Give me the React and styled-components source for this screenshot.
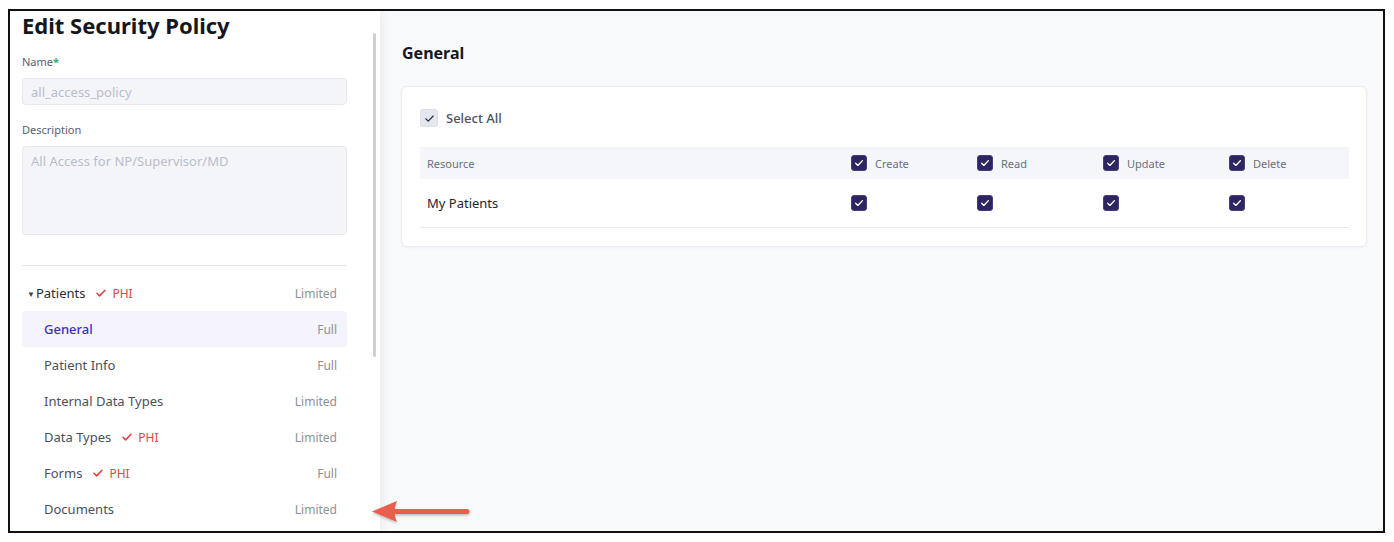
import React from 'react';
import styled, { createGlobalStyle } from 'styled-components';

const GlobalStyle = createGlobalStyle`
  html, body {
    margin: 0;
    padding: 0;
    background: #ffffff;
    font-family: "Noto Sans", "Open Sans", sans-serif;
  }
  * { box-sizing: border-box; }
`;

const Frame = styled.div`
  position: relative;
  margin: 9px 0 0 8px;
  width: 1377px;
  height: 524px;
  border: 2px solid #111;
  display: flex;
  overflow: hidden;
  background: #f8f9fb;
`;

const Sidebar = styled.aside`
  position: relative;
  width: 370px;
  flex-shrink: 0;
  background: #fff;
  padding: 0 33px 0 12px;
  overflow: hidden;
  box-shadow: 3px 0 10px rgba(30, 40, 80, 0.06);
  z-index: 1;
`;

const Scrollbar = styled.div`
  position: absolute;
  left: 363px;
  top: 22px;
  width: 3px;
  height: 324px;
  border-radius: 2px;
  background: #cfcfd2;
`;

const Title = styled.h1`
  margin: 0;
  font-size: 22px;
  line-height: 28px;
  font-weight: 700;
  color: #16171c;
`;

const Label = styled.div`
  margin-top: ${p => p.$top}px;
  font-size: 11px;
  line-height: 16px;
  color: #5a5e6b;

  b {
    color: #2aa866;
    font-weight: 700;
  }
`;

const Field = styled.div`
  margin-top: 8px;
  height: ${p => p.$h}px;
  background: #f4f5f9;
  border: 1px solid #e6e8ee;
  border-radius: 4px;
  padding: ${p => (p.$multi ? '5px 8px' : '0 8px')};
  display: flex;
  align-items: ${p => (p.$multi ? 'flex-start' : 'center')};
  font-size: 13px;
  color: #b9bdcb;
`;

const Divider = styled.div`
  margin-top: 30px;
  height: 1px;
  background: #e6e8ed;
`;

const TreeList = styled.div`
  margin-top: 9px;
  display: flex;
  flex-direction: column;
`;

const TreeRow = styled.div`
  height: 36px;
  display: flex;
  align-items: center;
  justify-content: space-between;
  padding: 0 10px 0 ${p => (p.$child ? 22 : 5)}px;
  border-radius: 4px;
  background: ${p => (p.$active ? '#f5f4fd' : 'transparent')};
  font-size: 13px;
`;

const RowName = styled.span`
  display: flex;
  align-items: center;
  color: ${p => (p.$active ? '#3a2fbf' : p.$parent ? '#2b2d35' : '#4c505c')};
  font-weight: ${p => (p.$active ? 500 : 400)};
`;

const Caret = styled.span`
  font-size: 8px;
  color: #444;
  margin-right: 1px;
`;

const Phi = styled.span`
  display: inline-flex;
  align-items: center;
  gap: 5px;
  margin-left: 10px;
  color: #e2453f;
  font-size: 12px;
`;

const Access = styled.span`
  color: #8c909c;
  font-size: 12px;
`;

const Main = styled.main`
  flex: 1;
  padding: 31px 16px 0 21px;
`;

const Heading = styled.h2`
  margin: 0 0 22px 1px;
  font-size: 16px;
  line-height: 22px;
  font-weight: 700;
  color: #17181d;
`;

const Card = styled.section`
  background: #fff;
  border: 1px solid #eaecf1;
  border-radius: 6px;
  box-shadow: 0 1px 3px rgba(20, 30, 60, 0.04);
  padding: 18px 17px 18px 18px;
`;

const SelectAll = styled.div`
  height: 26px;
  display: flex;
  align-items: center;
  gap: 8px;
  font-size: 13px;
  color: #4e5263;
  font-weight: 500;
`;

const Table = styled.div`
  margin-top: 16px;
`;

const Row = styled.div`
  display: grid;
  grid-template-columns: 431px 126px 126px 126px 1fr;
  align-items: center;
  height: ${p => (p.$head ? 32 : 49)}px;
  background: ${p => (p.$head ? '#f5f6fa' : '#fff')};
  border-bottom: ${p => (p.$head ? 'none' : '1px solid #e8eaf0')};
`;

const Cell = styled.div`
  display: flex;
  align-items: center;
  gap: 8px;
  padding-left: ${p => (p.$first ? 7 : 0)}px;
  font-size: ${p => (p.$head ? 11 : 13)}px;
  color: ${p => (p.$head ? '#6b6f7e' : '#23252d')};
`;

const Box = styled.span`
  width: ${p => p.$size}px;
  height: ${p => p.$size}px;
  border-radius: 3px;
  flex-shrink: 0;
  display: inline-flex;
  align-items: center;
  justify-content: center;
  background: ${p => (p.$light ? '#e5e7ef' : '#2d2561')};
  border: 1px solid ${p => (p.$light ? '#dcdfe8' : '#453d7d')};
`;

const Arrow = styled.svg`
  position: absolute;
  left: 351px;
  top: 475px;
  z-index: 2;
`;

const Check = ({ color, size = 10, width = 1.6 }) => (
  <svg width={size} height={size} viewBox="0 0 12 12" fill="none">
    <path d="M2 6.3l2.6 2.6L10 3.3" stroke={color} strokeWidth={width} strokeLinecap="round" strokeLinejoin="round" />
  </svg>
);

const CheckBox = ({ light }) => (
  <Box $size={light ? 18 : 16} $light={light}>
    <Check color={light ? '#2a2c36' : '#ffffff'} size={light ? 11 : 10} width={light ? 1.3 : 1.6} />
  </Box>
);

const tree = [
  { name: 'Patients', access: 'Limited', parent: true, phi: true },
  { name: 'General', access: 'Full', active: true },
  { name: 'Patient Info', access: 'Full' },
  { name: 'Internal Data Types', access: 'Limited' },
  { name: 'Data Types', access: 'Limited', phi: true },
  { name: 'Forms', access: 'Full', phi: true },
  { name: 'Documents', access: 'Limited' },
];

const perms = ['Create', 'Read', 'Update', 'Delete'];

export default function App() {
  return (
    <>
      <GlobalStyle />
      <Frame>
        <Sidebar>
          <Title>Edit Security Policy</Title>
          <Label $top={15}>Name<b>*</b></Label>
          <Field $h={27}>all_access_policy</Field>
          <Label $top={17}>Description</Label>
          <Field $h={89} $multi>All Access for NP/Supervisor/MD</Field>
          <Divider />
          <TreeList>
            {tree.map(item => (
              <TreeRow key={item.name} $child={!item.parent} $active={item.active}>
                <RowName $active={item.active} $parent={item.parent}>
                  {item.parent && <Caret>▼</Caret>}
                  {item.name}
                  {item.phi && (
                    <Phi>
                      <Check color="#e2453f" size={12} width={1.6} />
                      PHI
                    </Phi>
                  )}
                </RowName>
                <Access>{item.access}</Access>
              </TreeRow>
            ))}
          </TreeList>
          <Scrollbar />
        </Sidebar>
        <Main>
          <Heading>General</Heading>
          <Card>
            <SelectAll>
              <CheckBox light />
              Select All
            </SelectAll>
            <Table>
              <Row $head>
                <Cell $head $first>Resource</Cell>
                {perms.map(p => (
                  <Cell $head key={p}>
                    <CheckBox />
                    {p}
                  </Cell>
                ))}
              </Row>
              <Row>
                <Cell $first>My Patients</Cell>
                {perms.map(p => (
                  <Cell key={p}>
                    <CheckBox />
                  </Cell>
                ))}
              </Row>
            </Table>
          </Card>
        </Main>
        <Arrow width="120" height="50" viewBox="0 0 120 50">
          <defs>
            <filter id="sh" x="-20%" y="-50%" width="140%" height="200%">
              <feDropShadow dx="0" dy="1.5" stdDeviation="1.2" floodColor="#000" floodOpacity="0.25" />
            </filter>
          </defs>
          <g filter="url(#sh)">
            <path d="M32 25.5 H106" stroke="#e8604d" strokeWidth="5" strokeLinecap="round" />
            <path d="M11 25.5 L36 15 Q31 25.5 36 36 Z" fill="#e8604d" />
          </g>
        </Arrow>
      </Frame>
    </>
  );
}
